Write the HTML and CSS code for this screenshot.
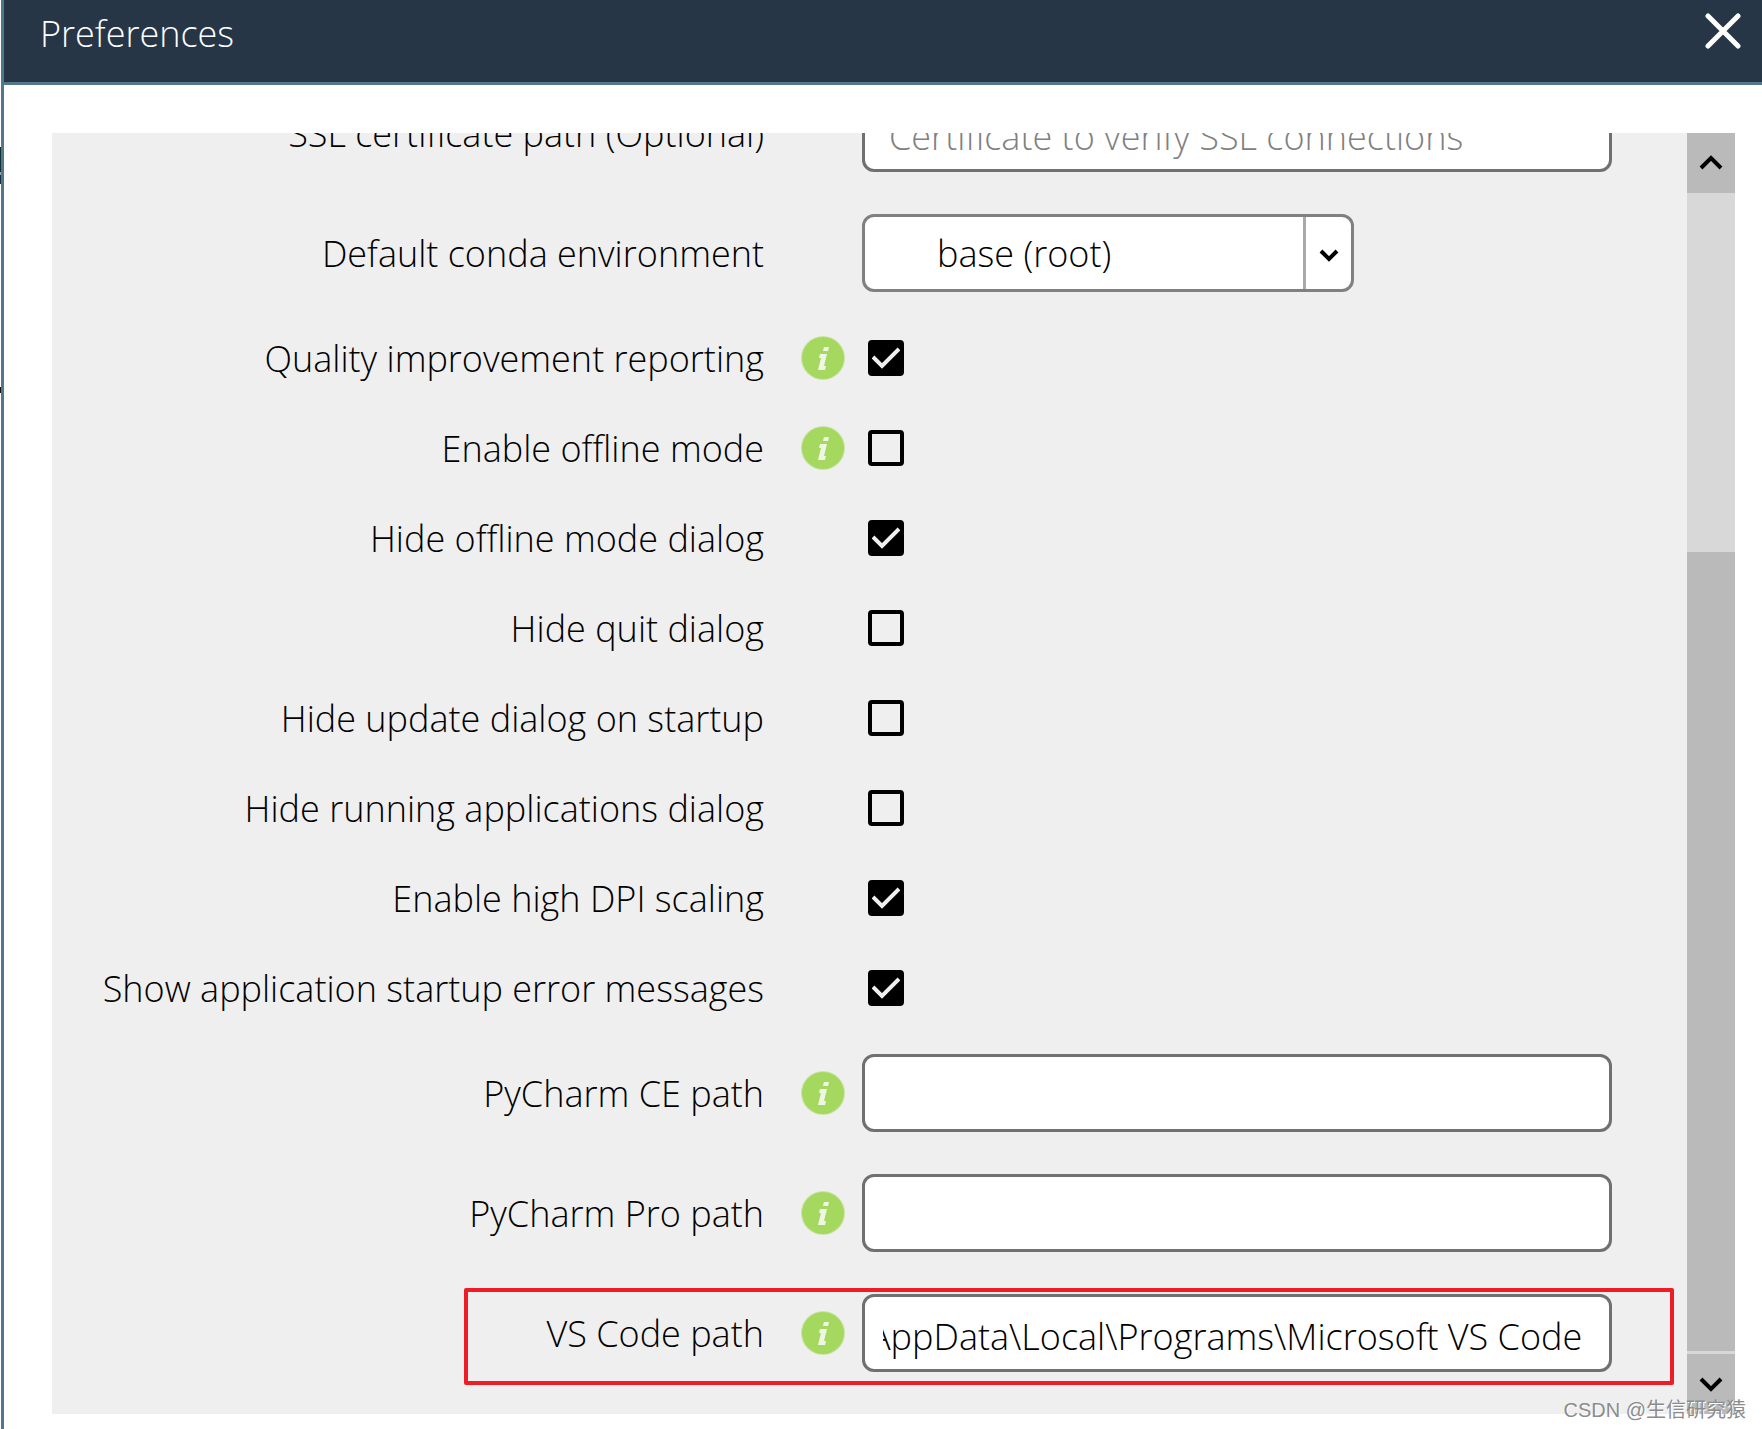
FILE: index.html
```html
<!DOCTYPE html>
<html lang="en">
<head>
  <meta charset="UTF-8">
  <meta name="viewport" content="width=device-width, initial-scale=1.0">
  <title>Preferences</title>
  <link rel="stylesheet" href="styles.css">
</head>
<body>
  <svg class="sprite" aria-hidden="true">
    <symbol id="info" viewBox="0 0 44 44">
      <circle cx="22" cy="22" r="22" fill="#a5d85e" opacity="0.5"/>
      <circle cx="22" cy="22" r="21" fill="#a5d85e"/>
      <path d="M23 11h5l-1 4h-5zM19 18h7l-3 12h2l-1 4h-7l3-12h-2z" fill="#f0f6e6"/>
    </symbol>
  </svg>

  <div class="dialog">
    <header class="titlebar">
      <h1>Preferences</h1>
      <button class="close" type="button" aria-label="Close">
        <svg width="36" height="36" viewBox="0 0 36 36"><path d="M3 3L33 33M33 3L3 33"/></svg>
      </button>
    </header>

    <main class="content">
      <form class="settings">
        <div class="row field">
          <label for="ssl">SSL certificate path (Optional)</label>
          <span class="hint"></span>
          <input class="text" type="text" id="ssl" placeholder="Certificate to verify SSL connections">
        </div>
        <div class="row field">
          <label for="env">Default conda environment</label>
          <span class="hint"></span>
          <div class="select">
            <select id="env">
              <option>base (root)</option>
            </select>
            <span class="arrow">
              <svg width="20" height="14" viewBox="0 0 20 14"><path d="M2 2L10 10L18 2"/></svg>
            </span>
          </div>
        </div>

        <div class="row">
          <label for="quality">Quality improvement reporting</label>
          <span class="hint"><svg><use href="#info"/></svg></span>
          <input class="check" type="checkbox" id="quality" checked>
        </div>
        <div class="row">
          <label for="offline">Enable offline mode</label>
          <span class="hint"><svg><use href="#info"/></svg></span>
          <input class="check" type="checkbox" id="offline">
        </div>
        <div class="row">
          <label for="hide-offline">Hide offline mode dialog</label>
          <span class="hint"></span>
          <input class="check" type="checkbox" id="hide-offline" checked>
        </div>
        <div class="row">
          <label for="hide-quit">Hide quit dialog</label>
          <span class="hint"></span>
          <input class="check" type="checkbox" id="hide-quit">
        </div>
        <div class="row">
          <label for="hide-update">Hide update dialog on startup</label>
          <span class="hint"></span>
          <input class="check" type="checkbox" id="hide-update">
        </div>
        <div class="row">
          <label for="hide-running">Hide running applications dialog</label>
          <span class="hint"></span>
          <input class="check" type="checkbox" id="hide-running">
        </div>
        <div class="row">
          <label for="dpi">Enable high DPI scaling</label>
          <span class="hint"></span>
          <input class="check" type="checkbox" id="dpi" checked>
        </div>
        <div class="row">
          <label for="errors">Show application startup error messages</label>
          <span class="hint"></span>
          <input class="check" type="checkbox" id="errors" checked>
        </div>

        <div class="row field">
          <label for="pycharm-ce">PyCharm CE path</label>
          <span class="hint"><svg><use href="#info"/></svg></span>
          <input class="text" type="text" id="pycharm-ce">
        </div>
        <div class="row field">
          <label for="pycharm-pro">PyCharm Pro path</label>
          <span class="hint"><svg><use href="#info"/></svg></span>
          <input class="text" type="text" id="pycharm-pro">
        </div>
        <div class="row field marked">
          <label for="vscode">VS Code path</label>
          <span class="hint"><svg><use href="#info"/></svg></span>
          <input class="text path" type="text" id="vscode" value="AppData\Local\Programs\Microsoft VS Code">
        </div>
      </form>

      <div class="scrollbar">
        <button type="button" aria-label="Scroll up">
          <svg width="24" height="16" viewBox="0 0 24 16"><path d="M2 13L12 3L22 13"/></svg>
        </button>
        <div class="track"><div class="thumb"></div></div>
        <button type="button" aria-label="Scroll down">
          <svg width="24" height="16" viewBox="0 0 24 16"><path d="M2 3L12 13L22 3"/></svg>
        </button>
      </div>
    </main>
  </div>

  <div class="watermark">CSDN @生信研究猿</div>

  <script>
    // show the end of a long path
    const path = document.getElementById("vscode");
    path.scrollLeft = path.scrollWidth;
  </script>
</body>
</html>
```

FILE: styles.css
```css
* {
  box-sizing: border-box;
}

body {
  margin: 0;
  padding-left: 1px;
  /* sliver of the window behind the dialog */
  background: linear-gradient(white 147px, #123038 147px, #123038 172px, #9aa8ac 172px, #9aa8ac 175px, #123038 175px, #123038 184px, white 184px, white 387px, #201008 387px, #201008 393px, white 393px);
  color: black;
  font-family: "Open Sans", "Noto Sans", sans-serif;
  font-size: 36px;
  font-weight: 300;
}

.sprite {
  display: none;
}

input, select {
  font: inherit;
  color: inherit;
}

.dialog {
  display: flex;
  flex-direction: column;
  height: 100vh;
  border-left: 3px solid #53778b;
  background: white;
}

.titlebar {
  display: flex;
  justify-content: space-between;
  align-items: flex-start;
  height: 85px;
  padding: 10px 21px 0 36px;
  border-bottom: 3px solid #53778b;
  background: #263646;
  color: white;
}

.titlebar h1 {
  margin: 0;
  font-size: 36px;
  font-weight: 300;
  line-height: 48px;
}

.close {
  padding: 3px 0 0;
  border: 0;
  background: none;
}

.close svg {
  display: block;
  stroke: white;
  stroke-width: 5;
  stroke-linecap: round;
  fill: none;
}

.content {
  display: flex;
  flex: 1;
  min-height: 0;
  margin: 48px 27px 15px 48px;
  background: #efefef;
}

/* scrolled to the bottom, the first row is cut off */
.settings {
  display: flex;
  flex: 1;
  flex-direction: column;
  justify-content: flex-end;
  overflow: hidden;
  padding-bottom: 21px;
}

.row {
  display: grid;
  flex: none;
  grid-template-columns: minmax(0, 712fr) 98px minmax(0, 750fr);
  align-items: center;
  height: 90px;
  padding-right: 75px;
}

.row.field {
  height: 120px;
}

.row label {
  text-align: right;
  white-space: nowrap;
}

.hint {
  padding-left: 37px;
}

.hint svg {
  display: block;
  width: 44px;
  height: 44px;
}

.text {
  width: 100%;
  height: 78px;
  padding: 6px 27px 0 24px;
  border: 3px solid #707070;
  border-radius: 12px;
  background: white;
}

.text.path {
  padding-left: 18px;
}

.text::placeholder {
  color: #808080;
  opacity: 1;
}

.select {
  position: relative;
  width: 492px;
  max-width: 100%;
}

.select select {
  display: block;
  width: 100%;
  height: 78px;
  padding: 0 60px 0 72px;
  border: 3px solid #808080;
  border-radius: 12px;
  background: white;
  appearance: none;
}

.arrow {
  position: absolute;
  top: 3px;
  right: 3px;
  bottom: 3px;
  display: flex;
  align-items: center;
  justify-content: center;
  width: 48px;
  padding-top: 6px;
  border-left: 3px solid #a9a9a9;
  pointer-events: none;
}

.arrow svg, .scrollbar svg {
  stroke: black;
  stroke-width: 4;
  fill: none;
}

.check {
  width: 36px;
  height: 36px;
  margin: 0 0 0 6px;
  border: 4px solid black;
  border-radius: 4px;
  appearance: none;
}

.check:checked {
  background: black url("data:image/svg+xml,%3Csvg xmlns='http://www.w3.org/2000/svg' viewBox='0 0 28 28'%3E%3Cpath d='M1 13L10 22L27 5' fill='none' stroke='%23efefef' stroke-width='4'/%3E%3C/svg%3E") center / 28px 28px no-repeat;
}

.marked {
  position: relative;
}

.marked::after {
  content: "";
  position: absolute;
  top: 15px;
  right: 13px;
  bottom: 8px;
  left: 412px;
  border: 4px solid #ee1c25;
  border-radius: 2px;
  pointer-events: none;
}

.scrollbar {
  display: flex;
  flex-direction: column;
  width: 48px;
}

.scrollbar button {
  height: 60px;
  padding: 0;
  border: 0;
  background: #bababa;
}

.scrollbar svg {
  display: block;
  margin: 0 auto;
}

.track {
  display: flex;
  flex: 1;
  flex-direction: column;
  justify-content: flex-end;
  padding-bottom: 3px;
  background: #d8d8d8;
}

.thumb {
  height: 69%;
  background: #bababa;
}

.watermark {
  position: absolute;
  right: 16px;
  bottom: 5px;
  color: #8c8c8c;
  font-family: "Liberation Sans", "Noto Sans CJK SC", sans-serif;
  font-size: 20px;
  font-weight: 400;
  line-height: 28px;
  text-shadow: 1px 1px 0 white;
}
```
